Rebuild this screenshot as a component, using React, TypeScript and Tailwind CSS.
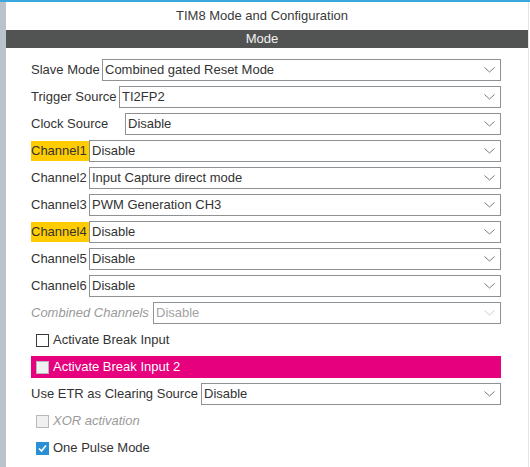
import React from "react";

type Row =
  | { kind: "select"; label: string; value: string; w: number; hl?: boolean; disabled?: boolean }
  | { kind: "check"; label: string; checked?: boolean; disabled?: boolean; pink?: boolean };

const rows: Row[] = [
  { kind: "select", label: "Slave Mode", value: "Combined gated Reset Mode", w: 71 },
  { kind: "select", label: "Trigger Source", value: "TI2FP2", w: 88 },
  { kind: "select", label: "Clock Source", value: "Disable", w: 94 },
  { kind: "select", label: "Channel1", value: "Disable", w: 58, hl: true },
  { kind: "select", label: "Channel2", value: "Input Capture direct mode", w: 58 },
  { kind: "select", label: "Channel3", value: "PWM Generation CH3", w: 58 },
  { kind: "select", label: "Channel4", value: "Disable", w: 58, hl: true },
  { kind: "select", label: "Channel5", value: "Disable", w: 58 },
  { kind: "select", label: "Channel6", value: "Disable", w: 58 },
  { kind: "select", label: "Combined Channels", value: "Disable", w: 122, disabled: true },
  { kind: "check", label: "Activate Break Input" },
  { kind: "check", label: "Activate Break Input 2", pink: true },
  { kind: "select", label: "Use ETR as Clearing Source", value: "Disable", w: 170 },
  { kind: "check", label: "XOR activation", disabled: true },
  { kind: "check", label: "One Pulse Mode", checked: true },
];

function Chevron({ disabled }: { disabled?: boolean }) {
  return (
    <svg width="11" height="6" viewBox="0 0 11 6" className="shrink-0">
      <path d="M0.5 0.5 L5.5 5 L10.5 0.5" fill="none" stroke={disabled ? "#cfcfcf" : "#7a7a7a"} strokeWidth="1" />
    </svg>
  );
}

function Box({ checked, disabled, pink }: { checked?: boolean; disabled?: boolean; pink?: boolean }) {
  if (checked) {
    return (
      <span className="flex h-[13px] w-[13px] shrink-0 items-center justify-center bg-[#2b8fd6]">
        <svg width="11" height="11" viewBox="0 0 11 11">
          <path d="M2 5.5 L4.5 8 L9 2.5" fill="none" stroke="#fff" strokeWidth="1.6" />
        </svg>
      </span>
    );
  }
  if (pink) return <span className="h-[13px] w-[13px] shrink-0 border border-[#b4b8bb] bg-[#eef0f2]" />;
  if (disabled) return <span className="h-[13px] w-[13px] shrink-0 border border-[#b8b8b8] bg-[#f0f0f0]" />;
  return <span className="h-[13px] w-[13px] shrink-0 border border-[#3a3a3a] bg-white" />;
}

export default function App() {
  return (
    <div
      className="flex h-[467px] w-[530px] flex-col bg-white text-[13px] text-[#333]"
      style={{ fontFamily: '"Liberation Sans", Arial, sans-serif' }}
    >
      <div className="h-[2px] bg-[#3ba7dc]" />
      <div className="flex flex-1">
        <div className="w-[6px] bg-[#b9c3c9]" />
        <div className="flex flex-1 flex-col border-r border-[#e4e4e4] mr-[1px]">
          <div className="flex h-[28px] items-center justify-center pr-[10px] text-[#3a3a3a]">
            TIM8 Mode and Configuration
          </div>
          <div className="flex h-[18px] items-center justify-center bg-[#525453] pr-[10px] text-[#f2f2f2]">Mode</div>
          <div className="flex flex-col gap-[5px] pl-[25px] pt-[11px]">
            {rows.map((r) =>
              r.kind === "select" ? (
                <div key={r.label} className="flex h-[22px] w-[470px] items-center">
                  <span
                    className={`flex h-[20px] shrink-0 items-center whitespace-nowrap ${r.hl ? "bg-[#ffcc00]" : ""} ${r.disabled ? "italic text-[#9a9a9a]" : ""}`}
                    style={{ width: r.w }}
                  >
                    {r.label}
                  </span>
                  <div className="flex h-[22px] flex-1 items-center justify-between border border-[#8f9295] bg-white pl-[2px] pr-[5px]">
                    <span className={`whitespace-nowrap ${r.disabled ? "text-[#a3a3a3]" : "text-[#333]"}`}>{r.value}</span>
                    <Chevron disabled={r.disabled} />
                  </div>
                </div>
              ) : (
                <div
                  key={r.label}
                  className={`flex h-[22px] w-[470px] items-center gap-[4px] pl-[5px] ${r.pink ? "bg-[#e6007e] text-white" : ""}`}
                >
                  <Box checked={r.checked} disabled={r.disabled} pink={r.pink} />
                  <span className={r.disabled ? "italic text-[#9a9a9a]" : ""}>{r.label}</span>
                </div>
              )
            )}
          </div>
        </div>
      </div>
    </div>
  );
}
